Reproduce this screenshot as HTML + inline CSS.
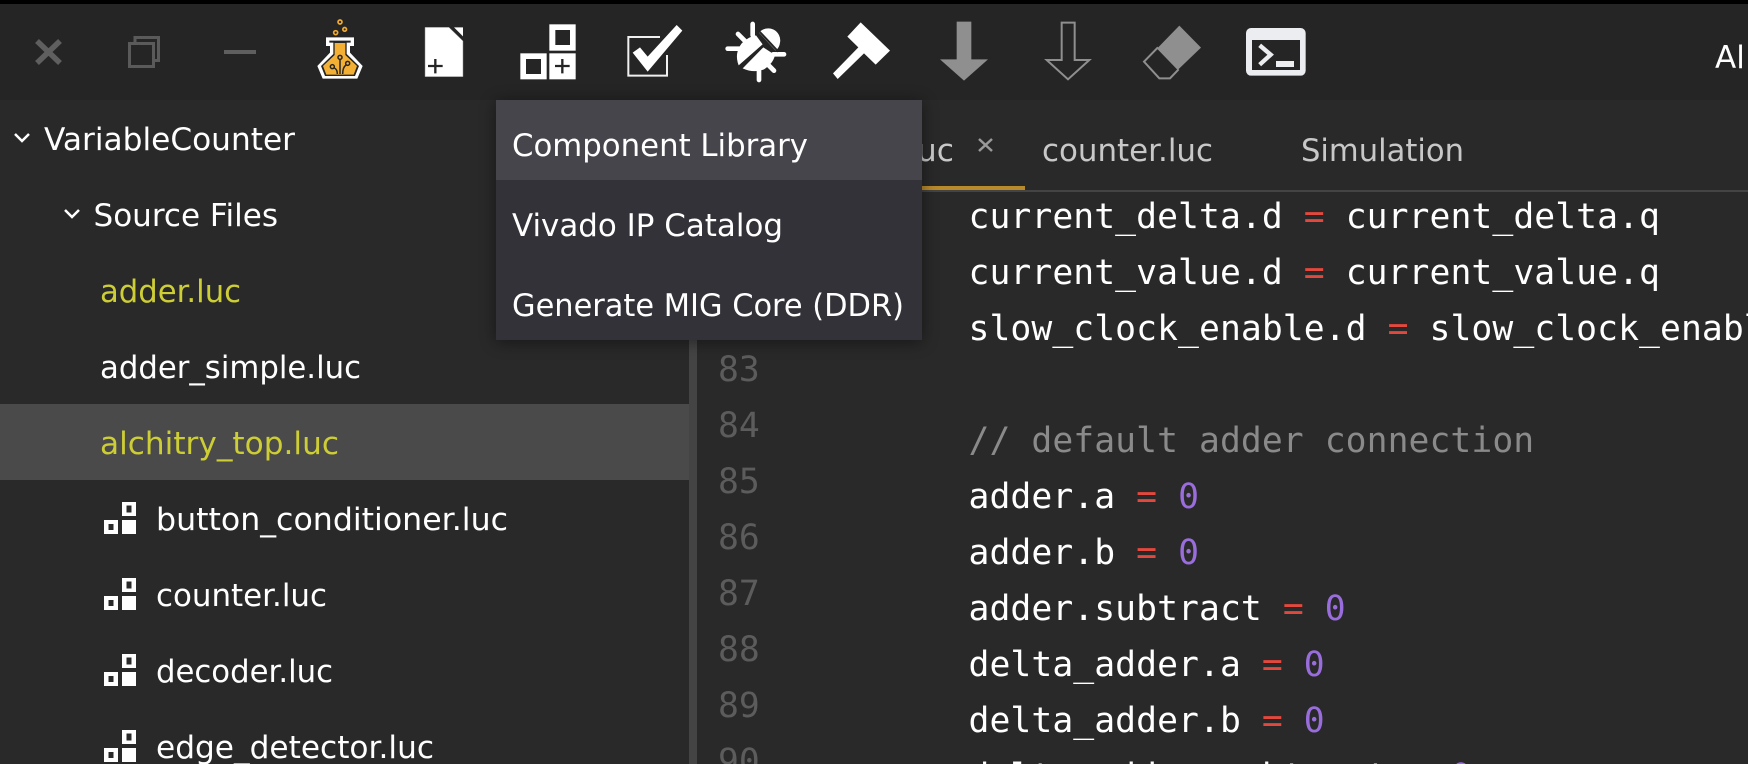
<!DOCTYPE html>
<html><head><meta charset="utf-8"><title>Alchitry Labs</title>
<style>
html,body{margin:0;padding:0;background:#292929;width:1748px;height:764px;overflow:hidden}
svg{display:block}
text{white-space:pre}
.s{font-family:"DejaVu Sans",sans-serif;font-size:31px;fill:#fff}
.m{font-family:"DejaVu Sans Mono",monospace;font-size:34.7px;letter-spacing:.07px;fill:#fff}
.g{font-family:"DejaVu Sans Mono",monospace;font-size:34.7px;fill:#5c5c5c}
.e{fill:#e2483d}.n{fill:#9a6ddc}.c{fill:#8a8a8a}
</style></head><body>
<svg width="1748" height="764" viewBox="0 0 1748 764" xmlns="http://www.w3.org/2000/svg">
<rect width="1748" height="764" fill="#292929"/>
<rect width="1748" height="100" fill="#252525"/>
<rect width="1748" height="4" fill="#000"/>

<!-- window controls -->
<path d="M37 41L60 63M60 41L37 63" stroke="#5f5f5f" stroke-width="5.500" fill="none"/>
<rect x="129.500" y="43.500" width="24" height="23" fill="none" stroke="#5a5a5a" stroke-width="3"/>
<path d="M135 42V37.500H158.500V60.500H154" fill="none" stroke="#5a5a5a" stroke-width="3"/>
<rect x="224" y="50" width="32" height="4" fill="#5f5f5f"/>

<!-- flask, file, blocks -->
<svg x="300" y="10" width="320" height="80" viewBox="0 0 960 240">
<g fill="none" stroke="#f0ab2e" stroke-width="5"><circle cx="120" cy="36" r="6"/><circle cx="107" cy="68" r="6"/><circle cx="134" cy="58" r="5.500"/></g>
<path d="M78 82H162V108H150V128L188 168L172 206H68L52 168L90 128V108H78Z" fill="#fff"/>
<path d="M88 92H152V98H140V132L177 168L165 198H75L63 168L100 132V98H88Z" fill="#252525"/>
<path d="M104 99H136V135L171 168L161 194H79L69 168L104 135Z" fill="#f3b034"/>
<g fill="none" stroke="#252525" stroke-width="4.500"><circle cx="120" cy="142" r="6"/><circle cx="97" cy="170" r="6"/><circle cx="143" cy="160" r="6"/><path d="M120 148V192M103 174Q112 178 112 192M138 165Q128 172 128 192"/></g>
<path d="M375 52H447L489 93V200H375Z" fill="#fff" stroke="#8a8a8a" stroke-width="1.500"/>
<path d="M462 52H489V79Z" fill="#fff"/>
<path d="M406 147V190M384 168H428" stroke="#252525" stroke-width="7"/>
<rect x="748" y="43" width="79" height="79" fill="#fff"/><rect x="766" y="60" width="44" height="45" fill="#252525"/>
<rect x="661" y="130" width="79" height="78" fill="#fff"/><rect x="678" y="147" width="45" height="45" fill="#252525"/>
<rect x="748" y="130" width="79" height="78" fill="#fff"/>
<path d="M787 147V190M765 168H809" stroke="#252525" stroke-width="7"/>
</svg>

<!-- check, bug, hammer -->
<svg x="610" y="10" width="320" height="80" viewBox="0 0 960 240">
<path d="M150 81H55V197H171V135" fill="none" stroke="#f0f0f0" stroke-width="6"/>
<path d="M68 128L90 112L113 140L200 45L217 62L113 185Z" fill="#fff"/>
<g fill="#fff">
<path d="M447 68A36 36 0 0 1 510 98A36 36 0 0 1 497 122Z"/>
<path d="M438 76L458 103L386 166Q372 130 395 100Q415 80 438 76Z"/>
<path d="M460 112L495 135Q490 160 462 178Q430 190 398 175Z"/>
</g>
<g stroke="#fff" stroke-width="14" stroke-linecap="round" fill="none">
<path d="M428 42V76M384 72L410 98M353 116H388M490 133H522M447 176V210M470 160L492 182"/>
</g>
<path d="M444 60L505 125" stroke="#252525" stroke-width="6" fill="none"/>
<path d="M388 170L460 106" stroke="#252525" stroke-width="7" fill="none"/>
<path d="M752 37L840 122L797 164L762 130L683 207L669 190L745 112L712 80Z" fill="#fff"/>
</svg>

<!-- arrows, eraser, terminal -->
<svg x="920" y="10" width="400" height="80" viewBox="0 0 1200 240">
<path d="M110 35H154V148H204L132 212L60 148H110Z" fill="#8f8f8f"/>
<path d="M425 38H464V150H508L444 208L380 150H425Z" fill="none" stroke="#8f8f8f" stroke-width="6"/>
<path d="M778 47L843 113L773 180L711 116Z" fill="#8f8f8f"/>
<path d="M714 112L672 155L718 205H750L776 178" fill="none" stroke="#8f8f8f" stroke-width="6"/>
<rect x="978" y="54" width="179" height="143" rx="15" fill="#ecedf1"/>
<rect x="996" y="90" width="144" height="90" fill="#252525"/>
<path d="M1019 106L1052 134L1019 164" fill="none" stroke="#ecedf1" stroke-width="13"/>
<rect x="1068" y="153" width="54" height="18" fill="#ecedf1"/>
</svg>

<text class="s" x="1715" y="68">Al</text>

<!-- sidebar -->
<rect x="0" y="404" width="689" height="76" fill="#4a4a4a"/>
<rect x="689" y="100" width="8" height="664" fill="#444"/>
<path d="M15 134L22 141L29 134M65 210L72 217L79 210" fill="none" stroke="#fff" stroke-width="2.500"/>
<text class="s" x="44" y="150" textLength="251" lengthAdjust="spacingAndGlyphs">VariableCounter</text>
<text class="s" x="93.500" y="226" textLength="184.500" lengthAdjust="spacingAndGlyphs">Source Files</text>
<text class="s" x="100" y="302" textLength="141" lengthAdjust="spacingAndGlyphs" style="fill:#cdcd36">adder.luc</text>
<text class="s" x="100" y="378" textLength="261" lengthAdjust="spacingAndGlyphs">adder_simple.luc</text>
<text class="s" x="100" y="454" textLength="239" lengthAdjust="spacingAndGlyphs" style="fill:#cdcd36">alchitry_top.luc</text>
<text class="s" x="156" y="530" textLength="352" lengthAdjust="spacingAndGlyphs">button_conditioner.luc</text>
<text class="s" x="156" y="606" textLength="171" lengthAdjust="spacingAndGlyphs">counter.luc</text>
<text class="s" x="156" y="682" textLength="177" lengthAdjust="spacingAndGlyphs">decoder.luc</text>
<text class="s" x="156" y="758" textLength="278" lengthAdjust="spacingAndGlyphs">edge_detector.luc</text>
<g fill="#fff">
<path fill-rule="evenodd" d="M122 502h14v14h-14zM126.500 505.500v7h5v-7zM104 520h14v14h-14zM108.500 524v6h5v-6zM122 520h14v14h-14z"/>
<path fill-rule="evenodd" d="M122 578h14v14h-14zM126.500 581.500v7h5v-7zM104 596h14v14h-14zM108.500 600v6h5v-6zM122 596h14v14h-14z"/>
<path fill-rule="evenodd" d="M122 654h14v14h-14zM126.500 657.500v7h5v-7zM104 672h14v14h-14zM108.500 676v6h5v-6zM122 672h14v14h-14z"/>
<path fill-rule="evenodd" d="M122 730h14v14h-14zM126.500 733.500v7h5v-7zM104 748h14v14h-14zM108.500 752v6h5v-6zM122 748h14v14h-14z"/>
</g>

<!-- tabs -->
<rect x="697" y="190" width="1051" height="2" fill="#444"/>
<rect x="697" y="186" width="328" height="4" fill="#b98a2c"/>
<text class="s" x="714" y="161" textLength="240" lengthAdjust="spacingAndGlyphs" style="fill:#c8c8c8">alchitry_top.luc</text>
<path d="M979 139L992 151M992 139L979 151" stroke="#9a9a9a" stroke-width="2.500"/>
<text class="s" x="1042" y="161" textLength="171" lengthAdjust="spacingAndGlyphs" style="fill:#c8c8c8">counter.luc</text>
<text class="s" x="1301" y="161" textLength="163" lengthAdjust="spacingAndGlyphs" style="fill:#c8c8c8">Simulation</text>

<!-- gutter -->
<text class="g" x="718" y="381">83</text>
<text class="g" x="718" y="437">84</text>
<text class="g" x="718" y="493">85</text>
<text class="g" x="718" y="549">86</text>
<text class="g" x="718" y="605">87</text>
<text class="g" x="718" y="661">88</text>
<text class="g" x="718" y="717">89</text>
<text class="g" x="718" y="773">90</text>

<!-- code -->
<text class="m" x="968.500" y="228">current_delta.d <tspan class="e">=</tspan> current_delta.q</text>
<text class="m" x="968.500" y="284">current_value.d <tspan class="e">=</tspan> current_value.q</text>
<text class="m" x="968.500" y="340">slow_clock_enable.d <tspan class="e">=</tspan> slow_clock_enable.q</text>
<text class="m c" x="968.500" y="452">// default adder connection</text>
<text class="m" x="968.500" y="508">adder.a <tspan class="e">=</tspan> <tspan class="n">0</tspan></text>
<text class="m" x="968.500" y="564">adder.b <tspan class="e">=</tspan> <tspan class="n">0</tspan></text>
<text class="m" x="968.500" y="620">adder.subtract <tspan class="e">=</tspan> <tspan class="n">0</tspan></text>
<text class="m" x="968.500" y="676">delta_adder.a <tspan class="e">=</tspan> <tspan class="n">0</tspan></text>
<text class="m" x="968.500" y="732">delta_adder.b <tspan class="e">=</tspan> <tspan class="n">0</tspan></text>
<text class="m" x="968.500" y="788">delta_adder.subtract <tspan class="e">=</tspan> <tspan class="n">0</tspan></text>

<!-- menu -->
<rect x="496" y="100" width="426" height="240" fill="#333238" style="filter:drop-shadow(0 2px 8px rgba(0,0,0,.45))"/>
<rect x="496" y="100" width="426" height="80" fill="#47454c"/>
<text class="s" x="512" y="156" textLength="296" lengthAdjust="spacingAndGlyphs">Component Library</text>
<text class="s" x="512" y="236" textLength="271" lengthAdjust="spacingAndGlyphs">Vivado IP Catalog</text>
<text class="s" x="512" y="316" textLength="392" lengthAdjust="spacingAndGlyphs">Generate MIG Core (DDR)</text>
</svg>
</body></html>
